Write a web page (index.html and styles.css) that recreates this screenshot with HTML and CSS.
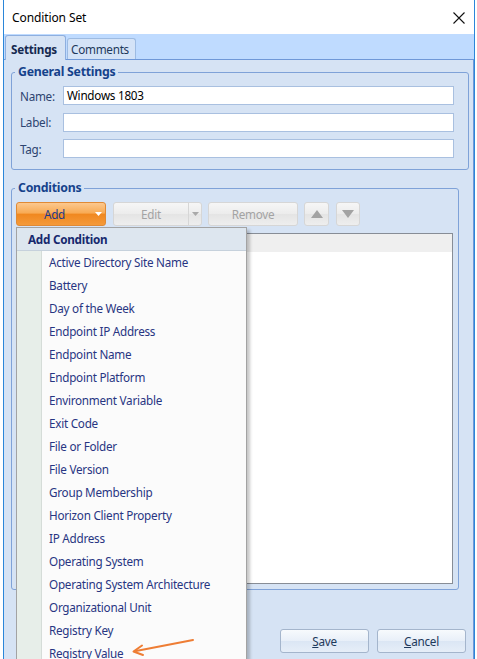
FILE: index.html
```html
<!DOCTYPE html>
<html>
<head>
<meta charset="utf-8">
<title>Condition Set</title>
<link rel="stylesheet" href="styles.css">
</head>
<body>
<div class="window">
  <div class="titlebar">
    <span class="title">Condition Set</span>
    <svg class="close" width="12" height="12" viewBox="0 0 12 12"><path d="M0.5 0.5 L11.5 11.5 M11.5 0.5 L0.5 11.5" stroke="#111" stroke-width="1.1" fill="none"/></svg>
  </div>
  <div class="tabstrip">
    <div class="tab active">Settings</div>
    <div class="tab">Comments</div>
  </div>
  <div class="tabpage">
    <fieldset class="group general">
      <legend>General Settings</legend>
      <div class="form">
        <span class="lbl">Name:</span><div class="input">Windows 1803</div>
        <span class="lbl">Label:</span><div class="input"></div>
        <span class="lbl">Tag:</span><div class="input"></div>
      </div>
    </fieldset>
    <fieldset class="group conditions">
      <legend>Conditions</legend>
      <div class="toolbar">
        <div class="btn add"><span class="btn-text">Add</span><svg class="caret" width="7" height="4" viewBox="0 0 7 4"><path d="M0 0 L7 0 L3.5 4 Z" fill="#fff"/></svg></div>
        <div class="btn split disabled"><span class="btn-text">Edit</span><span class="split-arrow"><svg width="7" height="4" viewBox="0 0 7 4"><path d="M0 0 L7 0 L3.5 4 Z" fill="#a9a9a9"/></svg></span></div>
        <div class="btn remove disabled"><span class="btn-text">Remove</span></div>
        <div class="btn arrow up disabled"><svg width="12" height="8" viewBox="0 0 12 8"><path d="M0 8 L12 8 L6 0 Z" fill="#a3a3a3"/></svg></div>
        <div class="btn arrow down disabled"><svg width="12" height="8" viewBox="0 0 12 8"><path d="M0 0 L12 0 L6 8 Z" fill="#a3a3a3"/></svg></div>
        <div class="menu">
          <div class="menu-head">Add Condition</div>
          <div class="menu-items">
            <div class="item">Active Directory Site Name</div>
            <div class="item">Battery</div>
            <div class="item">Day of the Week</div>
            <div class="item">Endpoint IP Address</div>
            <div class="item">Endpoint Name</div>
            <div class="item">Endpoint Platform</div>
            <div class="item">Environment Variable</div>
            <div class="item">Exit Code</div>
            <div class="item">File or Folder</div>
            <div class="item">File Version</div>
            <div class="item">Group Membership</div>
            <div class="item">Horizon Client Property</div>
            <div class="item">IP Address</div>
            <div class="item">Operating System</div>
            <div class="item">Operating System Architecture</div>
            <div class="item">Organizational Unit</div>
            <div class="item">Registry Key</div>
            <div class="item">Registry Value</div>
          </div>
        </div>
      </div>
      <div class="list"><div class="list-head"></div></div>
    </fieldset>
    <div class="footer">
      <div class="dlg-btn"><span class="ul">S</span>ave</div>
      <div class="dlg-btn"><span class="ul">C</span>ancel</div>
    </div>
  </div>
</div>
<svg class="annot" width="477" height="659" viewBox="0 0 477 659">
  <path d="M193 640 L136 651" stroke="#ee7d34" stroke-width="2" fill="none" stroke-linecap="round"/>
  <path d="M142 645.5 L133.5 651.5 L143 655" stroke="#ee7d34" stroke-width="2" fill="none" stroke-linecap="round" stroke-linejoin="round"/>
</svg>
</body>
</html>
```
FILE: styles.css
```css
* { box-sizing: border-box; }
html, body { margin: 0; padding: 0; }
body {
  width: 477px;
  height: 659px;
  overflow: hidden;
  position: relative;
  background: #fff;
  font-family: "Noto Sans", "Open Sans", sans-serif;
  font-size: 11.7px;
  letter-spacing: -0.25px;
  color: #1e395b;
}
.window {
  margin-left: 3px;
  width: 472px;
  height: 659px;
  border-left: 1px solid #2b86d9;
  border-right: 1px solid #2b86d9;
  display: flex;
  flex-direction: column;
  background: #fff;
}
.titlebar {
  flex: none;
  height: 34px;
  display: flex;
  align-items: center;
  justify-content: space-between;
  padding: 1px 9px 0 8px;
  color: #000;
}
.title { font-size: 12px; letter-spacing: -0.1px; }
.close { display: block; }

.tabstrip {
  flex: none;
  height: 25px;
  background: #bfdbff;
  display: flex;
  align-items: flex-end;
  padding-left: 1px;
}
.tab {
  height: 21px;
  width: 69px;
  margin-left: 1px;
  padding-left: 3px;
  border: 1px solid #9dbbe2;
  border-bottom: none;
  border-radius: 3px 3px 0 0;
  background: #d4e3f7;
  line-height: 20px;
  color: #1e395b;
}
.tab.active {
  position: relative;
  z-index: 1;
  height: 25px;
  width: 61px;
  margin-left: 0;
  margin-bottom: -1px;
  padding-left: 5px;
  background: #d6e3f4;
  border-color: #8eafdf;
  font-weight: bold;
  color: #15294f;
  line-height: 27px;
}

.tabpage {
  flex: 1;
  position: relative;
  background: #d6e3f4;
  border-top: 1px solid #6f98d8;
  border-right: 1px solid #6f98d8;
  display: flex;
  flex-direction: column;
}

fieldset.group {
  min-width: 0;
  border: 1px solid #7fa2d8;
  border-radius: 3px;
}
fieldset.group legend {
  font-weight: bold;
  color: #15428b;
  font-size: 12.3px;
  line-height: 16px;
  padding: 0 3px;
}
.general {
  margin: 4px 4px 0 7px;
  padding: 6px 14px 11px 8px;
}
.general legend { margin-left: -5px; }
.form {
  display: grid;
  grid-template-columns: 43px 1fr;
  grid-auto-rows: 19px;
  row-gap: 7.5px;
  align-items: center;
}
.lbl { color: #2d4470; }
.input {
  height: 19px;
  background: #fff;
  border: 1px solid #a9c0e0;
  padding-left: 3px;
  line-height: 17px;
  color: #000;
}

.conditions {
  margin: 10px 14px 0 7px;
  padding: 6px 5px 5px 4px;
}
.conditions legend { margin-left: -1px; }
.toolbar {
  position: relative;
  display: flex;
  height: 24px;
}
.btn {
  height: 24px;
  border: 1px solid #d6d6d6;
  border-radius: 3px;
  background: linear-gradient(#f6f6f6, #ececec 50%, #e4e4e4 51%, #eeeeee);
  display: flex;
  align-items: center;
  justify-content: center;
  color: #a3a3a3;
}
.btn.add {
  width: 90px;
  border-color: #e08a35;
  background: linear-gradient(#fcc88e, #f8ab55 45%, #f08820 52%, #f59a3a);
  color: #1d3a8c;
  justify-content: flex-start;
  position: relative;
}
.btn.add .btn-text { width: 75px; text-align: center; }
.btn.add .caret { margin-left: 3px; }
.btn.split {
  width: 89px;
  margin-left: 7px;
  justify-content: flex-start;
}
.btn.split .btn-text {
  width: 75px;
  text-align: center;
  border-right: 1px solid #d6d6d6;
  line-height: 22px;
}
.split-arrow {
  flex: 1;
  display: flex;
  align-items: center;
  justify-content: center;
}
.split-arrow svg { display: block; }
.btn.remove { width: 90px; margin-left: 6px; }
.btn.arrow { width: 25px; margin-left: 6px; }
.btn.arrow.down { width: 24px; margin-left: 7px; }
.btn svg { display: block; }

.list {
  margin-top: 7px;
  height: 351px;
  border: 1px solid #878d96;
  background: #fff;
}
.list-head {
  height: 18px;
  background: #efefef;
}

.menu {
  position: absolute;
  left: 0;
  top: calc(100% + 1px);
  width: 231px;
  border: 1px solid #a3a3a3;
  background: #fbfbfb;
  box-shadow: 3px 3px 3px rgba(0, 0, 0, 0.22);
  z-index: 5;
}
.menu-head {
  height: 23px;
  background: #dde6ef;
  border-bottom: 1px solid #c6d1dc;
  padding-left: 11px;
  line-height: 22px;
  font-weight: bold;
  color: #16296e;
}
.menu-items {
  background: linear-gradient(to right, #e7eee9 0, #e7eee9 24px, #d5dcd8 24px, #d5dcd8 25px, #fbfbfb 25px);
}
.item {
  height: 23px;
  line-height: 23px;
  padding-left: 32px;
  color: #283582;
  white-space: nowrap;
}

.footer {
  margin-top: 39px;
  display: flex;
  justify-content: flex-end;
  gap: 8px;
  padding-right: 7px;
}
.dlg-btn {
  width: 89px;
  height: 24px;
  border: 1px solid #a4b5cc;
  border-radius: 3px;
  background: linear-gradient(#f7fafd, #e8eff8 50%, #dbe6f4 51%, #e6eef8);
  text-align: center;
  line-height: 22px;
  color: #1e395b;
}
.ul { text-decoration: underline; }

.annot {
  position: absolute;
  left: 0;
  top: 0;
  pointer-events: none;
  z-index: 10;
}
```
